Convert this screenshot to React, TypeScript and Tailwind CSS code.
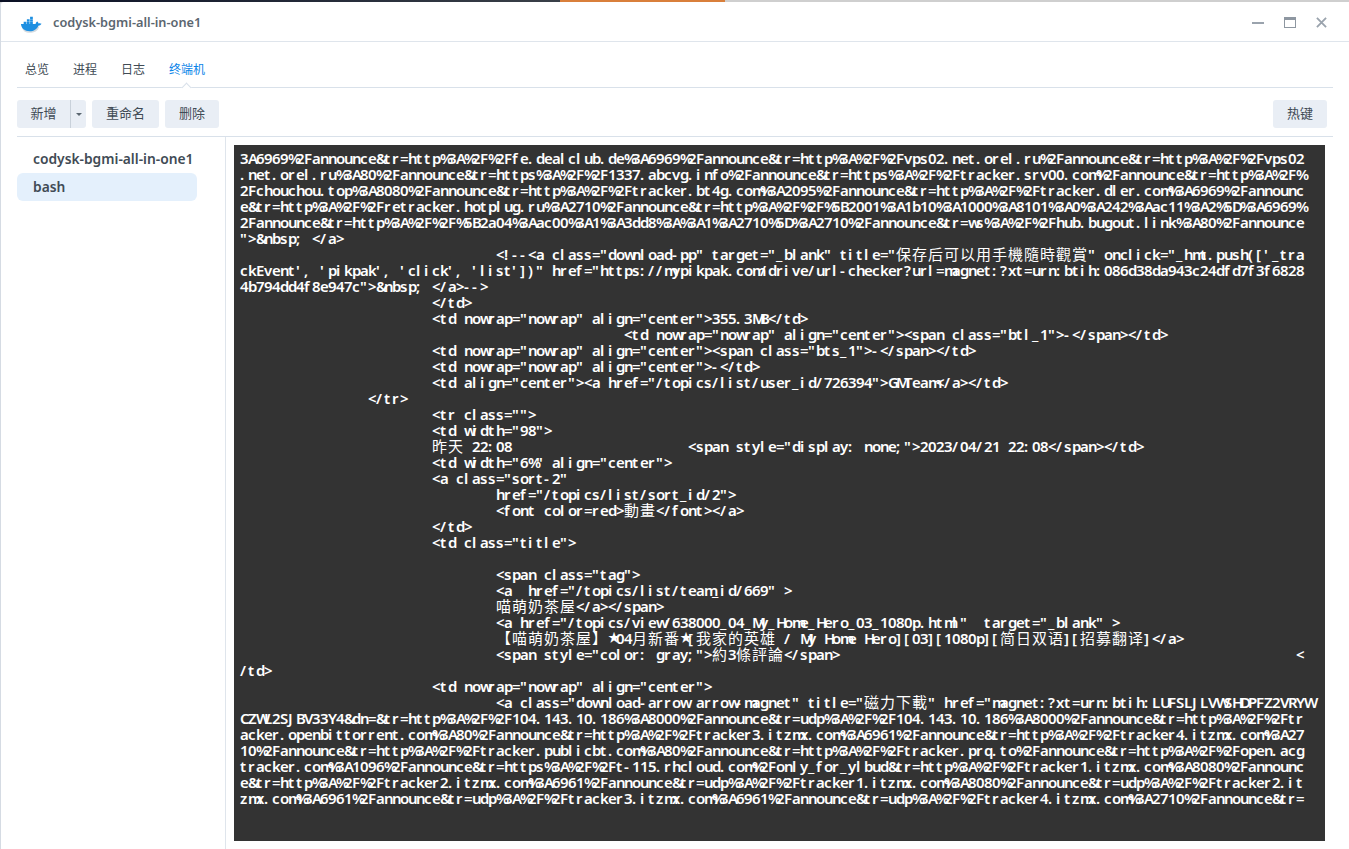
const sp = (n: number) => " ".repeat(n);

const ROWS = [
  "3A6969%2Fannounce&tr=http%3A%2F%2Ffe.dealclub.de%3A6969%2Fannounce&tr=http%3A%2F%2Fvps02.net.orel.ru%2Fannounce&tr=http%3A%2F%2Fvps02",
  ".net.orel.ru%3A80%2Fannounce&tr=https%3A%2F%2F1337.abcvg.info%2Fannounce&tr=https%3A%2F%2Ftracker.srv00.com%2Fannounce&tr=http%3A%2F%",
  "2Fchouchou.top%3A8080%2Fannounce&tr=http%3A%2F%2Ftracker.bt4g.com%3A2095%2Fannounce&tr=http%3A%2F%2Ftracker.dler.com%3A6969%2Fannounc",
  "e&tr=http%3A%2F%2Fretracker.hotplug.ru%3A2710%2Fannounce&tr=http%3A%2F%2F%5B2001%3A1b10%3A1000%3A8101%3A0%3A242%3Aac11%3A2%5D%3A6969%",
  "2Fannounce&tr=http%3A%2F%2F%5B2a04%3Aac00%3A1%3A3dd8%3A%3A1%3A2710%5D%3A2710%2Fannounce&tr=ws%3A%2F%2Fhub.bugout.link%3A80%2Fannounce",
  '">&nbsp; </a>',
  sp(32) + '<!--<a class="download-pp" target="_blank" title="保存后可以用手機隨時觀賞" onclick="_hmt.push([\'_tra',
  "ckEvent', 'pikpak', 'click', 'list'])\" href=\"https://mypikpak.com/drive/url-checker?url=magnet:?xt=urn:btih:086d38da943c24dfd7f3f6828",
  '4b794dd4f8e947c">&nbsp; </a>-->',
  sp(24) + "</td>",
  sp(24) + '<td nowrap="nowrap" align="center">355.3MB</td>',
  sp(48) + '<td nowrap="nowrap" align="center"><span class="btl_1">-</span></td>',
  sp(24) + '<td nowrap="nowrap" align="center"><span class="bts_1">-</span></td>',
  sp(24) + '<td nowrap="nowrap" align="center">-</td>',
  sp(24) + '<td align="center"><a href="/topics/list/user_id/726394">GMTeam</a></td>',
  sp(16) + "</tr>",
  sp(24) + '<tr class="">',
  sp(24) + '<td width="98">',
  sp(24) + "昨天 22:08" + sp(22) + '<span style="display: none;">2023/04/21 22:08</span></td>',
  sp(24) + '<td width="6%" align="center">',
  sp(24) + '<a class="sort-2"',
  sp(32) + 'href="/topics/list/sort_id/2">',
  sp(32) + "<font color=red>動畫</font></a>",
  sp(24) + "</td>",
  sp(24) + '<td class="title">',
  "",
  sp(32) + '<span class="tag">',
  sp(32) + '<a  href="/topics/list/team_id/669" >',
  sp(32) + "喵萌奶茶屋</a></span>",
  sp(32) + '<a href="/topics/view/638000_04_My_Home_Hero_03_1080p.html"  target="_blank" >',
  sp(32) + "【喵萌奶茶屋】★04月新番★[我家的英雄 / My Home Hero][03][1080p][简日双语][招募翻译]</a>",
  sp(32) + '<span style="color: gray;">約3條評論</span>' + sp(57) + "<",
  "/td>",
  sp(24) + '<td nowrap="nowrap" align="center">',
  sp(32) + '<a class="download-arrow arrow-magnet" title="磁力下載" href="magnet:?xt=urn:btih:LUFSLJLVWSHDPFZ2VRYW',
  "CZWL2SJBV33Y4&dn=&tr=http%3A%2F%2F104.143.10.186%3A8000%2Fannounce&tr=udp%3A%2F%2F104.143.10.186%3A8000%2Fannounce&tr=http%3A%2F%2Ftr",
  "acker.openbittorrent.com%3A80%2Fannounce&tr=http%3A%2F%2Ftracker3.itzmx.com%3A6961%2Fannounce&tr=http%3A%2F%2Ftracker4.itzmx.com%3A27",
  "10%2Fannounce&tr=http%3A%2F%2Ftracker.publicbt.com%3A80%2Fannounce&tr=http%3A%2F%2Ftracker.prq.to%2Fannounce&tr=http%3A%2F%2Fopen.acg",
  "tracker.com%3A1096%2Fannounce&tr=https%3A%2F%2Ft-115.rhcloud.com%2Fonly_for_ylbud&tr=http%3A%2F%2Ftracker1.itzmx.com%3A8080%2Fannounc",
  "e&tr=http%3A%2F%2Ftracker2.itzmx.com%3A6961%2Fannounce&tr=udp%3A%2F%2Ftracker1.itzmx.com%3A8080%2Fannounce&tr=udp%3A%2F%2Ftracker2.it",
  "zmx.com%3A6961%2Fannounce&tr=udp%3A%2F%2Ftracker3.itzmx.com%3A6961%2Fannounce&tr=udp%3A%2F%2Ftracker4.itzmx.com%3A2710%2Fannounce&tr=",
];

const TABS = ["总览", "进程", "日志", "终端机"];

// one cell per character, the way the terminal paints its grid
function TermRow({ text }: { text: string }) {
  return (
    <div className="flex h-4 whitespace-pre">
      {Array.from(text).map((ch, i) => (
        <span key={i} className={ch.charCodeAt(0) >= 0x2e80 ? "w-4 shrink-0 font-normal" : ch === "★" ? "w-2 shrink-0 text-[12px]" : "w-2 shrink-0"}>
          {ch}
        </span>
      ))}
    </div>
  );
}

function DockerLogo() {
  return (
    <svg viewBox="0 0 24 18" className="mt-[3px] h-[17px] w-[22px]" aria-hidden>
      <path d="M2 10.5h19c-1 5-6 7-10.500 7-4.500 0-7.500-2-8.500-7z" fill="#d5dbe0" transform="translate(0 .6)" />
      <path d="M1 8.500h16c.3-1.500 1.200-2.500 2-2.800.7.600 1.100 1.300 1.200 2.100 1-.3 2.300-.2 3.300.5-.8 1.500-2.200 2-3.500 2-1.300 3.800-5.300 6-9.300 6C5 16.300 1.500 13.500 1 8.500z" fill="#1d8fe1" />
      <path d="M4 6h3v2.500H4zM7.500 6h3v2.500h-3zM11 6h3v2.500h-3zM7.500 3.200h3v2.500h-3zM11 3.200h3v2.500h-3zM11 .5h3V3h-3z" fill="#1d8fe1" />
    </svg>
  );
}

function ToolButton({ label, className }: { label: string; className: string }) {
  return (
    <button type="button" className={"flex h-7 items-center justify-center rounded-[3px] bg-[#e9eef5] text-[13px] text-[#414b55] " + className}>
      {label}
    </button>
  );
}

export default function App() {
  return (
    <div className="flex h-[849px] w-[1349px] flex-col overflow-hidden bg-[#cfcfcf] font-['Noto_Sans','Noto_Sans_CJK_SC',sans-serif]">
      {/* wallpaper showing above the window */}
      <div className="flex h-[2px] shrink-0">
        <div className="w-[560px] bg-gradient-to-r from-[#0b1024] to-[#3a4048]" />
        <div className="w-[165px] bg-[#d97f3b]" />
        <div className="flex-1 bg-[#cfcfcf]" />
      </div>

      <div className="flex min-h-0 flex-1 flex-col rounded-tl-[3px] border-l border-[#d5dbe3] bg-white">
        {/* Title bar */}
        <div className="flex h-[40px] shrink-0 items-center border-b border-[#dfe5ec] pl-[19px] pr-[22px] pt-[2px]">
          <DockerLogo />
          <span className="ml-[11px] text-[12.75px] font-semibold text-[#5b6670]">codysk-bgmi-all-in-one1</span>
          <div className="ml-auto flex items-center gap-5 text-[#9aa3ad]">
            <div className="h-[2px] w-3 bg-[#9aa3ad]" />
            <div className="h-[11px] w-3 border-[1.5px] border-t-[3px] border-[#8e97a1]" />
            <svg viewBox="0 0 12 12" className="h-[11px] w-[11px]" aria-hidden>
              <path d="M1 1l10 10M11 1L1 11" stroke="#9aa3ad" strokeWidth="2" fill="none" />
            </svg>
          </div>
        </div>

        {/* Tabs */}
        <div className="relative mx-4 flex h-[46px] shrink-0 items-center gap-6 border-b border-[#d9e1ea] pl-2 pt-[10px] text-[12px] text-[#414b55]">
          {TABS.map((tab) => (
            <span key={tab} className={tab === "终端机" ? "text-[#0a84e8]" : ""}>
              {tab}
            </span>
          ))}
          <div className="absolute bottom-[-4px] left-[166px] h-[7px] w-[7px] rotate-45 border-l border-t border-[#d9e1ea] bg-white" />
        </div>

        {/* Toolbar */}
        <div className="mx-4 flex h-[49px] shrink-0 items-center border-b border-[#d9e1ea] pt-1">
          <div className="flex h-7 overflow-hidden rounded-[3px] bg-[#e9eef5]">
            <span className="flex w-[54px] items-center justify-center border-r border-[#c9d1da] text-[13px] text-[#414b55]">新增</span>
            <span className="flex w-[15px] items-center justify-center">
              <span className="h-0 w-0 border-x-[3.5px] border-t-[3.5px] border-x-transparent border-t-[#5b6670]" />
            </span>
          </div>
          <ToolButton label="重命名" className="ml-[6px] w-[67px]" />
          <ToolButton label="删除" className="ml-[6px] w-[54px]" />
          <ToolButton label="热键" className="ml-auto mr-[6px] w-[54px]" />
        </div>

        <div className="flex min-h-0 flex-1">
          {/* Session list */}
          <div className="flex w-[225px] shrink-0 flex-col border-r border-[#dfe5ec] pl-4 pt-2">
            <div className="flex h-7 w-[180px] items-center pl-4 text-[13.8px] font-semibold whitespace-nowrap text-[#414b55]">codysk-bgmi-all-in-one1</div>
            <div className="flex h-7 w-[180px] items-center rounded-[6px] bg-[#e4f0fc] pl-4 text-[13.8px] font-semibold text-[#414b55]">bash</div>
          </div>

          {/* Terminal */}
          <div className="min-w-0 flex-1 pl-2 pr-6 pt-2 pb-2">
            <div className="h-[696px] overflow-hidden bg-[#333333] pl-[6px] pt-[5px] text-[15px] font-semibold leading-4 text-white">
              {ROWS.map((row, i) => (
                <TermRow key={i} text={row} />
              ))}
            </div>
          </div>
        </div>
      </div>
    </div>
  );
}
